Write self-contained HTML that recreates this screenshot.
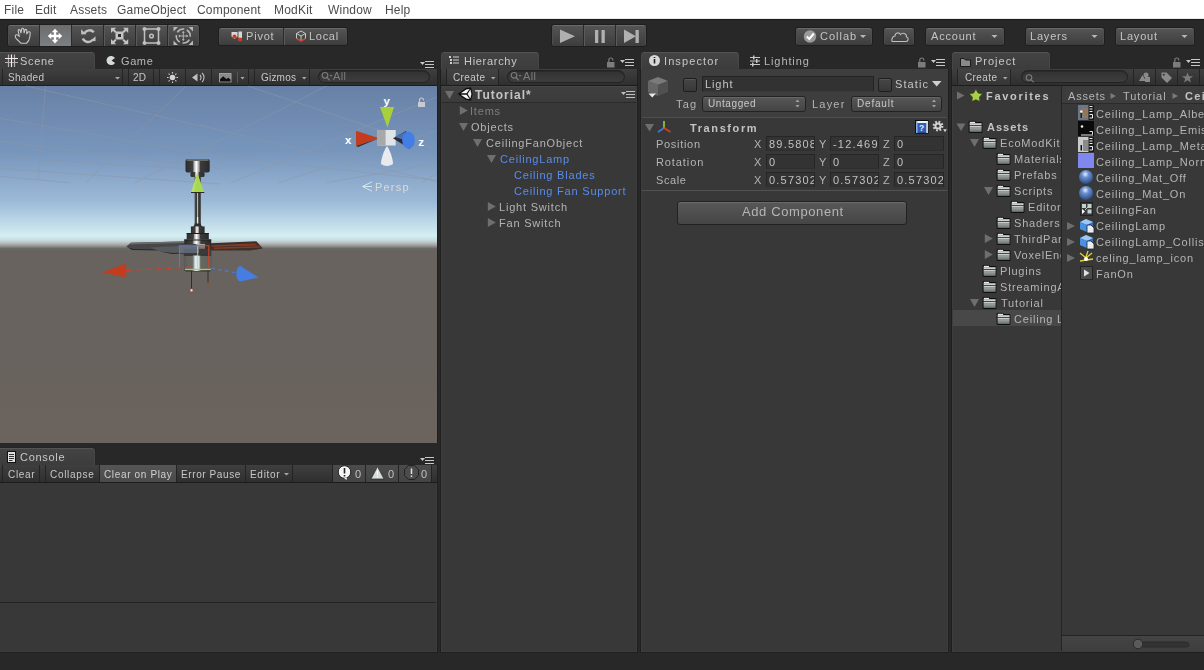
<!DOCTYPE html>
<html><head><meta charset="utf-8">
<style>
*{box-sizing:border-box;margin:0;padding:0}
html,body{width:1204px;height:670px;overflow:hidden;background:#282828}
body{position:relative;font-family:"Liberation Sans",sans-serif;font-size:11px;color:#b4b4b4}
.a{position:absolute}
.t{position:absolute;white-space:nowrap;line-height:1;will-change:transform}
svg{position:absolute;overflow:visible}
.btn{position:absolute;border:1px solid #1e1e1e;border-radius:3px;background:linear-gradient(#555555,#3d3d3d);box-shadow:inset 0 1px 0 #6a6a6a,inset 1px 0 0 #4e4e4e,inset -1px 0 0 #4e4e4e}
.seg{position:absolute;top:0;bottom:0;border-left:1px solid #2a2a2a;box-shadow:1px 0 0 #5a5a5a}
.tab{position:absolute;border-radius:4px 4px 0 0;background:linear-gradient(#444444,#3c3c3c);border:1px solid #262626;border-bottom:none;box-shadow:inset 0 1px 0 #545454,inset 1px 0 0 #474747,inset -1px 0 0 #474747}
.tb{position:absolute;background:linear-gradient(#3f3f3f,#2f2f2f);border-bottom:1px solid #1c1c1c}
.vs{position:absolute;width:1px;background:#242424}
.panel{position:absolute;background:#383838}
.search{position:absolute;border-radius:7px;background:linear-gradient(#323232,#3d3d3d);border:1px solid #232323;box-shadow:inset 0 1px 0 #2a2a2a}
</style></head><body>
<div class="a" style="left:0px;top:0px;width:1204px;height:18px;background:#fff"></div>
<div class="a" style="left:0px;top:18px;width:1204px;height:1px;background:#eaeaea"></div>
<div class="a" style="left:0px;top:19px;width:1204px;height:1px;background:#1a1a1a"></div>
<span class="t" style="left:3.5px;top:4px;font-size:12px;font-weight:400;color:#4c4c4c;letter-spacing:0.2px;">File</span>
<span class="t" style="left:35px;top:4px;font-size:12px;font-weight:400;color:#4c4c4c;letter-spacing:0.2px;">Edit</span>
<span class="t" style="left:69.8px;top:4px;font-size:12px;font-weight:400;color:#4c4c4c;letter-spacing:0.2px;">Assets</span>
<span class="t" style="left:116.8px;top:4px;font-size:12px;font-weight:400;color:#4c4c4c;letter-spacing:0.2px;">GameObject</span>
<span class="t" style="left:196.8px;top:4px;font-size:12px;font-weight:400;color:#4c4c4c;letter-spacing:0.2px;">Component</span>
<span class="t" style="left:274px;top:4px;font-size:12px;font-weight:400;color:#4c4c4c;letter-spacing:0.2px;">ModKit</span>
<span class="t" style="left:327.8px;top:4px;font-size:12px;font-weight:400;color:#4c4c4c;letter-spacing:0.2px;">Window</span>
<span class="t" style="left:385px;top:4px;font-size:12px;font-weight:400;color:#4c4c4c;letter-spacing:0.2px;">Help</span>
<div class="btn" style="left:7px;top:24px;width:193px;height:23px;"><div class="a" style="left:31px;top:0;width:33px;height:21px;background:linear-gradient(#6c6c6c,#7c8083);border-left:1px solid #2c2c2c;border-right:1px solid #2c2c2c"></div><div class="seg" style="left:95px"></div><div class="seg" style="left:127px"></div><div class="seg" style="left:159px"></div></div>
<svg style="left:0;top:20px" width="210" height="30" viewBox="0 20 210 30">
 <path d="M20.8 43.2 L16.3 38.6 C15 37.2 15 35.5 16 35 C17 34.5 18.3 35.2 19.3 36.5 L18.2 31 C18 29.6 19.6 29 20.2 30.3 L20.9 32.8 L21.6 29.3 C21.9 27.9 23.6 27.9 23.8 29.3 L24.1 32.8 L24.9 30.2 C25.3 29 27 29.2 26.9 30.6 L26.7 33.8 L28.2 32 C28.9 31.4 30.3 31.8 30.2 33 L29.8 37 C29.4 40 28 42 26.5 43.2 Z" fill="none" stroke="#c8c8c8" stroke-width="1.1" stroke-linejoin="round"/>
 <path fill="#fff" d="M55 28.7 L58.3 32.3 L56.2 32.3 L56.2 34.8 L58.7 34.8 L58.7 32.7 L62.3 36 L58.7 39.3 L58.7 37.2 L56.2 37.2 L56.2 39.7 L58.3 39.7 L55 43.5 L51.7 39.7 L53.8 39.7 L53.8 37.2 L51.3 37.2 L51.3 39.3 L47.8 36 L51.3 32.7 L51.3 34.8 L53.8 34.8 L53.8 32.3 L51.7 32.3 Z"/>
 <g fill="none" stroke="#c0c0c0" stroke-width="2.4"><path d="M84.5 33.2 A5.8 5.8 0 0 1 93.8 32.2"/><path d="M82.8 38.6 A5.8 5.8 0 0 0 92.5 40"/></g>
 <g fill="#c0c0c0"><path d="M81 29.3 L81.3 34.5 L86.4 34.2 Z"/><path d="M95.6 36.2 L95.5 41.3 L90.3 40.8 Z"/></g>
 <rect x="115.5" y="31.5" width="8" height="8" fill="#c4c4c4"/><rect x="118" y="34" width="3" height="3" fill="#2e2e2e"/>
 <g stroke="#c4c4c4" stroke-width="2" fill="none"><path d="M112.5 29 L115.8 32.3 M126.5 29 L123.2 32.3 M112.5 43 L115.8 39.7 M126.5 43 L123.2 39.7"/></g>
 <path fill="#c4c4c4" d="M111 27.8 L116.2 27.8 L111 33Z M128.2 27.8 L123 27.8 L128.2 33Z M111 44.2 L116.2 44.2 L111 39Z M128.2 44.2 L123 44.2 L128.2 39Z"/>
 <g fill="none" stroke="#c0c0c0" stroke-width="1.5"><rect x="144.5" y="29" width="14" height="14"/><circle cx="151.5" cy="36" r="1.8"/></g>
 <g fill="#c0c0c0"><circle cx="144.5" cy="29" r="2"/><circle cx="158.5" cy="29" r="2"/><circle cx="144.5" cy="43" r="2"/><circle cx="158.5" cy="43" r="2"/></g>
 <g fill="none" stroke="#b8b8b8" stroke-width="1.6"><circle cx="183.3" cy="36" r="7" stroke-dasharray="8 3" transform="rotate(-60 183.3 36)"/></g>
 <path d="M183.3 31.8 V40.2 M179.1 36 H187.5" stroke="#b8b8b8" stroke-width="0.9" fill="none"/>
 <g fill="#b8b8b8"><path d="M173.5 27 L178 27 L173.5 31.5Z M193 27 L188.5 27 L193 31.5Z M173.5 45 L178 45 L173.5 40.5Z M193 45 L188.5 45 L193 40.5Z"/><path d="M183.3 31 L184.8 32.8 L181.8 32.8Z M183.3 41 L184.8 39.2 L181.8 39.2Z M178.3 36 L180.1 34.5 L180.1 37.5Z M188.3 36 L186.5 34.5 L186.5 37.5Z"/></g>
</svg>
<div class="btn" style="left:218px;top:27px;width:130px;height:19px"><div class="seg" style="left:64px"></div></div>
<svg style="left:228px;top:28px" width="90" height="17" viewBox="228 28 90 17">
 <path d="M231.5 32 H237.5 V36.5 L234.5 39 L231.5 36.5Z" fill="#d8d8d8"/><circle cx="234.5" cy="36.5" r="2" fill="#d03a1e"/>
 <rect x="238.5" y="31.5" width="3.5" height="6.5" fill="#d8d8d8"/><circle cx="240" cy="39.5" r="2" fill="#d03a1e"/>
 <g fill="none" stroke="#c8c8c8" stroke-width="1"><path d="M296.5 33.5 L301 31 L305.5 33.5 V38.5 L301 41 L296.5 38.5Z M296.5 33.5 L301 36 L305.5 33.5 M301 36 V41"/></g>
 <path d="M296.5 38.5 L301 41 L305.5 38.5" fill="none" stroke="#d03a1e" stroke-width="1.3"/>
</svg>
<span class="t" style="left:245.6px;top:31px;font-size:11px;font-weight:400;color:#c4c4c4;letter-spacing:0.8px;">Pivot</span>
<span class="t" style="left:308.5px;top:31px;font-size:11px;font-weight:400;color:#c4c4c4;letter-spacing:0.7px;">Local</span>
<div class="btn" style="left:551px;top:24px;width:96px;height:23px"><div class="seg" style="left:31px"></div><div class="seg" style="left:63px"></div></div>
<svg style="left:552px;top:25px" width="94" height="21" viewBox="552 25 94 21">
 <path d="M560 29.5 L575 36.3 L560 43Z" fill="#b0b0b0"/>
 <rect x="595" y="30" width="3.3" height="13" fill="#b0b0b0"/><rect x="601.5" y="30" width="3.3" height="13" fill="#b0b0b0"/>
 <path d="M624 29.5 L636 36.3 L624 43Z" fill="#b0b0b0"/><rect x="635.5" y="30" width="3.3" height="13" fill="#b0b0b0"/>
</svg>
<div class="btn" style="left:795px;top:27px;width:78px;height:19px"></div>
<div class="btn" style="left:883px;top:27px;width:32px;height:19px"></div>
<div class="btn" style="left:925px;top:27px;width:80px;height:19px"></div>
<div class="btn" style="left:1025px;top:27px;width:80px;height:19px"></div>
<div class="btn" style="left:1115px;top:27px;width:80px;height:19px"></div>
<svg style="left:796px;top:28px" width="408" height="17" viewBox="796 28 408 17">
 <circle cx="810" cy="36.5" r="6.2" fill="#9a9a9a"/><path d="M806.8 36.5 L809.3 39 L813.8 33.5" fill="none" stroke="#fff" stroke-width="2"/>
 <path d="M892.5 41.5 H906 C908.5 41.5 909 37.5 906.5 37 C906.8 33.5 902.5 32 900.5 34.5 C899 32 895 32.5 895 36 C892 36 891 41.5 892.5 41.5Z" fill="none" stroke="#c0c0c0" stroke-width="1.1"/>
 <path fill="#b8b8b8" d="M860 35 H866 L863 38Z M991.5 35 H997.5 L994.5 38Z M1091.5 35 H1097.5 L1094.5 38Z M1181.5 35 H1187.5 L1184.5 38Z"/>
</svg>
<span class="t" style="left:819.8px;top:31px;font-size:11px;font-weight:400;color:#c4c4c4;letter-spacing:1.0px;">Collab</span>
<span class="t" style="left:931.0px;top:31px;font-size:11px;font-weight:400;color:#c4c4c4;letter-spacing:0.8px;">Account</span>
<span class="t" style="left:1030px;top:31px;font-size:11px;font-weight:400;color:#c4c4c4;letter-spacing:0.8px;">Layers</span>
<span class="t" style="left:1120px;top:31px;font-size:11px;font-weight:400;color:#c4c4c4;letter-spacing:0.8px;">Layout</span>
<div class="tab" style="left:-4px;top:51px;width:100px;height:18px"></div>
<svg style="left:0;top:50px" width="440" height="20" viewBox="0 50 440 20">
 <g stroke="#b8b0b0" stroke-width="1.2"><path d="M5 58.5 H18 M5 62.5 H18 M8.5 54.5 V67 M14.5 54.5 V67"/></g>
 <g stroke="#f0f0f0" stroke-width="1.2"><path d="M5 58.5 H18 M11.5 54.5 V67"/></g>
 <path d="M115 58 A4.6 4.6 0 1 0 115 63 L111.5 60.5Z" fill="#d4dadc"/>
 <path d="M420 62 H425 L422.5 65Z" fill="#c8c8c8"/><g stroke="#c8c8c8" stroke-width="1.2"><path d="M425 61.5 H434 M425 64.5 H434 M425 67.5 H434"/></g>
</svg>
<span class="t" style="left:19.6px;top:56px;font-size:11px;font-weight:400;color:#c8c8c8;letter-spacing:0.7px;">Scene</span>
<span class="t" style="left:120.6px;top:56px;font-size:11px;font-weight:400;color:#b8b8b8;letter-spacing:0.6px;">Game</span>
<div class="tb" style="left:0;top:69px;width:437px;height:17px"></div>
<div class="vs" style="left:2px;top:69px;height:16px"></div>
<div class="vs" style="left:122px;top:69px;height:16px"></div>
<div class="vs" style="left:128px;top:69px;height:16px"></div>
<div class="vs" style="left:153px;top:69px;height:16px"></div>
<div class="vs" style="left:159px;top:69px;height:16px"></div>
<div class="vs" style="left:185px;top:69px;height:16px"></div>
<div class="vs" style="left:211px;top:69px;height:16px"></div>
<div class="vs" style="left:248px;top:69px;height:16px"></div>
<div class="vs" style="left:254px;top:69px;height:16px"></div>
<div class="vs" style="left:309px;top:69px;height:16px"></div>
<span class="t" style="left:7.8px;top:73px;font-size:10px;font-weight:400;color:#c8c8c8;letter-spacing:0.3px;">Shaded</span>
<span class="t" style="left:133.4px;top:73px;font-size:10px;font-weight:400;color:#c8c8c8;letter-spacing:0.1px;">2D</span>
<span class="t" style="left:260.6px;top:73px;font-size:10px;font-weight:400;color:#c8c8c8;letter-spacing:0.2px;">Gizmos</span>
<div class="search" style="left:318px;top:70px;width:112px;height:13px"></div>
<svg style="left:110px;top:69px" width="330" height="17" viewBox="110 69 330 17">
 <path fill="#a8a8a8" d="M115 77 H120 L117.5 79.5Z M240.5 77 H244.5 L242.5 79.5Z M302 77 H306.5 L304.2 79.5Z"/>
 <circle cx="172.5" cy="77.5" r="2.8" fill="#d0d4d6"/>
 <g stroke="#d0d4d6" stroke-width="1.1"><path d="M172.5 72 V73.6 M172.5 81.4 V83 M167 77.5 H168.6 M176.4 77.5 H178 M168.6 73.6 L169.7 74.7 M175.3 80.3 L176.4 81.4 M176.4 73.6 L175.3 74.7 M169.7 80.3 L168.6 81.4"/></g>
 <path d="M192 77.5 L197.5 73.5 V81.5Z" fill="#c0c0c0"/>
 <g fill="none" stroke="#c0c0c0" stroke-width="1.1"><path d="M200 75 A3.5 3.5 0 0 1 200 80"/><path d="M202 73 A6 6 0 0 1 202 82"/></g>
 <rect x="219.5" y="73.5" width="11.5" height="8.5" fill="#8a8a8a" stroke="#9c9c9c" stroke-width="1"/>
 <path d="M220 81.5 V79.2 L223.2 76.2 L226.3 79 L228.3 77.8 L230.5 79.5 V81.5Z" fill="#0e0e0e"/>
 <path d="M219 82.5 H231.5" stroke="#555" stroke-width="1"/>
 <path d="M237.5 71.5 V83" stroke="#555" stroke-width="1"/>
 <g fill="none" stroke="#7c7c7c" stroke-width="1.1"><circle cx="325" cy="75.3" r="2.8"/><path d="M327 77.5 L329.8 80.3"/></g>
 <path d="M329.5 75 H332.5 L331 76.8Z" fill="#7c7c7c"/>
</svg>
<span class="t" style="left:333.4px;top:71px;font-size:11px;font-weight:400;color:#7c7c7c;letter-spacing:0.3px;">All</span>
<svg style="left:0;top:86px" width="437" height="357" viewBox="0 86 437 357">
 <defs>
  <linearGradient id="sky" x1="0" y1="86" x2="0" y2="443" gradientUnits="userSpaceOnUse">
   <stop offset="0" stop-color="#6880a6"/>
   <stop offset="0.185" stop-color="#7896bc"/>
   <stop offset="0.325" stop-color="#9dbad8"/>
   <stop offset="0.42" stop-color="#d4eef2"/>
   <stop offset="0.432" stop-color="#c4dce2"/>
   <stop offset="0.437" stop-color="#c4c8c8"/>
   <stop offset="0.446" stop-color="#a0a0a0"/>
   <stop offset="0.455" stop-color="#6c6a68"/>
   <stop offset="0.462" stop-color="#68635f"/>
   <stop offset="1" stop-color="#6a635e"/>
  </linearGradient>
 </defs>
 <rect x="0" y="86" width="437" height="357" fill="url(#sky)"/>
 <g stroke="#8c97a8" stroke-width="1" opacity="0.55" fill="none">
  <path d="M26 86 L220 130.2 M0 118.3 L220 156.5 M0 141.4 L220 168.4 M0 157.2 L181.6 168.4 M0 168.4 L220 184 M0 176.3 L69 182.7 M45.4 86 L38.2 180.4 M186 86 L86 182.7 M220 139.8 L135 182.7"/>
  <path d="M247.8 86 L437 149.3 M326.6 86 L200 150.5 M200 125.4 L437 181.6 M437 96.8 L231 182.7 M200 154 L437 180.4 M437 130.2 L278.8 182.7 M437 163.6 L326.6 182.7 M437 173.2 L422 182.7"/>
 </g>
 <!-- fan blades -->
 <defs>
  <linearGradient id="metal" x1="0" y1="0" x2="1" y2="0">
   <stop offset="0" stop-color="#2a2a2a"/><stop offset="0.3" stop-color="#404040"/><stop offset="0.36" stop-color="#b8b8b8"/><stop offset="0.45" stop-color="#ffffff"/><stop offset="0.56" stop-color="#9a9a9a"/><stop offset="0.62" stop-color="#3c3c3c"/><stop offset="1" stop-color="#2a2a2a"/>
  </linearGradient>
  <linearGradient id="rod" x1="0" y1="0" x2="1" y2="0">
   <stop offset="0" stop-color="#2a2a2a"/><stop offset="0.35" stop-color="#8a8a8a"/><stop offset="0.55" stop-color="#e8e8e8"/><stop offset="0.8" stop-color="#6a6a6a"/><stop offset="1" stop-color="#2a2a2a"/>
  </linearGradient>
 </defs>
 <path d="M126.2 246.5 L131 242.8 L190 241.3 L198 245.5 L160 249.3 L134 249Z" fill="#474747"/>
 <path d="M131 242.8 L190 241.3 L192 242.8 L129 244.6Z" fill="#6a6a6a"/>
 <path d="M126.2 246.5 L134 249 L160 249.3 L158 250.5 L132 250Z" fill="#2a2a2a"/>
 <path d="M150 247.5 L186 245.6 L200 247 L196 251.5 L174 253 L160 251.6Z" fill="#555a5e"/>
 <path d="M160 251.6 L174 253 L196 251.5 L195 253 L172 254Z" fill="#2a2a2a"/>
 <path d="M205 243.5 L256.3 241.3 L262.9 248.5 L250 250.5 L205 250.5Z" fill="#3a302c"/>
 <path d="M212 245.2 L255 243.6 L258 245.4 L212 246.8Z M214 247.4 L259.5 246.2 L261 247.6 L214 249Z" fill="#8a3a22"/>
 <!-- rod & canopy -->
 <rect x="194.7" y="176" width="6.1" height="51" fill="#383838"/>
 <rect x="195.2" y="176" width="1" height="51" fill="#4a4a4a"/>
 <path d="M197.6 192 V217" stroke="#c8dc58" stroke-width="1"/>
 <path d="M197.6 217 V226" stroke="#f0f0d8" stroke-width="1.4"/>
 <path d="M194.7 223.5 Q194.5 226.8 191 227.5 H204.5 Q201 226.8 200.8 223.5Z" fill="#2e2e2e"/>
 <rect x="185.5" y="159" width="24.2" height="13.5" rx="2" fill="url(#metal)"/>
 <rect x="186.5" y="159" width="22.2" height="2" rx="1" fill="#6a6a6a"/>
 <rect x="190.5" y="172" width="14" height="5" rx="1.5" fill="url(#metal)"/>
 <path d="M197.2 172.4 L204 192 L191.4 192Z" fill="#a8d850"/>
 <path d="M197.2 172.4 L191.4 192 L194 192Z" fill="#c4e878" opacity="0.6"/>
 <path d="M191 192.5 H204.3" stroke="#2a2a2a" stroke-width="1"/>
 <!-- motor housing -->
 <rect x="190.9" y="226.4" width="13.7" height="6.6" fill="url(#metal)"/>
 <rect x="186.7" y="233" width="22.1" height="6.5" fill="url(#metal)"/>
 <rect x="184.3" y="239.5" width="26.9" height="4.5" fill="url(#metal)"/>
 <path d="M186.7 233.5 H208.8 M184.3 240 H211.2" stroke="#1e1e1e" stroke-width="1"/>
 <!-- lower body -->
 <rect x="183.7" y="249" width="27.6" height="7.5" fill="#3a3a3a"/>
 <rect x="180" y="246" width="19" height="7" fill="#6a7280" opacity="0.8"/>
 <rect x="184.3" y="255.6" width="26.9" height="15.6" rx="1.5" fill="url(#metal)"/>
 <rect x="184.3" y="256" width="26.9" height="14" fill="#8c8c84" opacity="0.55"/>
 <rect x="194.5" y="256" width="5" height="14" fill="#d8eaf0"/>
 <path d="M185 269.5 H211" stroke="#b8c070" stroke-width="1.4"/>
 <path d="M186 271.5 H210" stroke="#7a3a2a" stroke-width="1"/>
 <g fill="none" stroke-width="1.1"><path d="M179.5 267.5 V245.7 H198.5" stroke="#4a7ce0"/><path d="M199 245.7 H208.8 V268" stroke="#d04428"/></g>
 <path d="M197.7 246 V270" stroke="#c8d870" stroke-width="0.9"/>
 <!-- handles -->
 <path d="M126 270.5 L192 267" stroke="#c8442a" stroke-width="1.3" stroke-dasharray="5 5"/>
 <path d="M211 268 L237 273" stroke="#4a7ad8" stroke-width="1.2" stroke-dasharray="4 3"/>
 <path d="M102.3 272.3 L126.2 263.6 L126.2 277.4Z" fill="#c43c1e"/>
 <path d="M240.3 266 L258.5 277.4 L240.3 281.6Z" fill="#467de0"/>
 <ellipse cx="240.3" cy="273.8" rx="4" ry="7.8" fill="#467de0"/>
 <g stroke="#2e2e2e" stroke-width="1"><path d="M191.5 271 V289.5 M208 271 V282.5"/></g>
 <circle cx="191.5" cy="290.3" r="1.5" fill="#f4f0e8" stroke="#b04020" stroke-width="0.7"/>
 <circle cx="208" cy="283.1" r="1.4" fill="#a04828"/>
 <!-- gizmo -->
 <path d="M380 107 L394 107 L387.5 127.4Z" fill="#a8d038"/>
 <path d="M381 146 L393 166 L381 166Z" fill="#ffffff" opacity="0"/>
 <path d="M387 146 C383 152 381 160 381 164 Q387 168 393 164 C393 160 391 152 387 146Z" fill="#e8eaec"/>
 <path d="M356 130.7 L379 138.3 L356 146Z" fill="#c43c1e"/>
 <path d="M356 146 L379 138.3 L358 147Z" fill="#3a2a28"/>
 <rect x="377.6" y="130" width="18.1" height="15.5" fill="#dfe4e8"/>
 <rect x="377.6" y="130" width="8" height="15.5" fill="#a8a8a8"/>
 <path d="M393 138.3 L406 131 L410 149Z" fill="#2a2a30"/>
 <path d="M395 137 L406 131.5 L404 140Z" fill="#4a70b0"/>
 <ellipse cx="408.5" cy="140.2" rx="6.3" ry="8.5" fill="#437de6"/>
 <g fill="#fff" font-family="Liberation Sans" font-weight="700" font-size="11.5"><text x="383.5" y="104.5">y</text><text x="345" y="143.5">x</text><text x="418.3" y="145.5">z</text></g>
 <rect x="418" y="102" width="7" height="5" fill="#c8ccd2"/>
 <path d="M419.5 102 V100 A2 2 0 0 1 423.5 100 V100.5" fill="none" stroke="#c8ccd2" stroke-width="1.1"/>
 <path d="M372 181.8 L362.5 186.5 L372 191.2 M363 186.5 H372" fill="none" stroke="#d4e4ee" stroke-width="1"/>
</svg>
<span class="t" style="left:374.6px;top:182px;font-size:11px;font-weight:400;color:#d8dcd8;letter-spacing:1.2px;">Persp</span>
<div class="tab" style="left:-4px;top:447px;width:100px;height:18px"></div>
<span class="t" style="left:20.4px;top:452px;font-size:11px;font-weight:400;color:#c8c8c8;letter-spacing:0.7px;">Console</span>
<div class="tb" style="left:0;top:465px;width:437px;height:18px"></div>
<div class="a" style="left:99px;top:465px;width:77px;height:17px;background:linear-gradient(#555,#4a4a4a)"></div>
<div class="a" style="left:332px;top:465px;width:99px;height:17px;background:linear-gradient(#4c4c4c,#444)"></div>
<div class="vs" style="left:2px;top:465px;height:17px"></div>
<div class="vs" style="left:39px;top:465px;height:17px"></div>
<div class="vs" style="left:45px;top:465px;height:17px"></div>
<div class="vs" style="left:99px;top:465px;height:17px"></div>
<div class="vs" style="left:176px;top:465px;height:17px"></div>
<div class="vs" style="left:245px;top:465px;height:17px"></div>
<div class="vs" style="left:292px;top:465px;height:17px"></div>
<div class="vs" style="left:332px;top:465px;height:17px"></div>
<div class="vs" style="left:365px;top:465px;height:17px"></div>
<div class="vs" style="left:398px;top:465px;height:17px"></div>
<div class="vs" style="left:431px;top:465px;height:17px"></div>
<div class="a" style="left:0px;top:483px;width:437px;height:169px;background:#383838"></div>
<div class="a" style="left:0px;top:602px;width:437px;height:1px;background:#232323"></div>
<span class="t" style="left:7.8px;top:470px;font-size:10px;font-weight:400;color:#c8c8c8;letter-spacing:0.7px;">Clear</span>
<span class="t" style="left:50.3px;top:470px;font-size:10px;font-weight:400;color:#c8c8c8;letter-spacing:0.7px;">Collapse</span>
<span class="t" style="left:104.3px;top:470px;font-size:10px;font-weight:400;color:#d0d0d0;letter-spacing:0.65px;">Clear on Play</span>
<span class="t" style="left:180.5px;top:470px;font-size:10px;font-weight:400;color:#c8c8c8;letter-spacing:0.6px;">Error Pause</span>
<span class="t" style="left:250px;top:470px;font-size:10px;font-weight:400;color:#c8c8c8;letter-spacing:0.7px;">Editor</span>
<span class="t" style="left:354.8px;top:468.5px;font-size:11px;font-weight:400;color:#c0c0c0;letter-spacing:0px;">0</span>
<span class="t" style="left:387.8px;top:468.5px;font-size:11px;font-weight:400;color:#c0c0c0;letter-spacing:0px;">0</span>
<span class="t" style="left:420.8px;top:468.5px;font-size:11px;font-weight:400;color:#c0c0c0;letter-spacing:0px;">0</span>
<svg style="left:0;top:446px" width="440" height="40" viewBox="0 446 440 40">
 <rect x="7.5" y="451.5" width="8" height="11" fill="#e0e0e0" stroke="#111" stroke-width="1"/>
 <g stroke="#333" stroke-width="1"><path d="M9 454.5 H14 M9 456.5 H14 M9 458.5 H14 M9 460.5 H12.5"/></g>
 <path d="M420 458 H425 L422.5 461Z" fill="#c8c8c8"/><g stroke="#c8c8c8" stroke-width="1.2"><path d="M425 457.5 H434 M425 460.5 H434 M425 463.5 H434"/></g>
 <path fill="#a8a8a8" d="M284 473 H289 L286.5 475.5Z"/>
 <circle cx="344.5" cy="472" r="6.3" fill="#f4f4f4" stroke="#222" stroke-width="1"/>
 <path d="M344 478 L346.5 480 L347 477.5Z" fill="#f4f4f4"/>
 <path d="M344.5 468 V473.5 M344.5 475 V476.5" stroke="#222" stroke-width="1.6"/>
 <path d="M377.5 466.5 L384 479 H371Z" fill="#d8dcdc" stroke="#333" stroke-width="0.8"/>
 <path d="M377.5 470.5 V475 M377.5 476.2 V477.5" stroke="#fff" stroke-width="1.2"/>
 <path d="M408.6 465.5 H414.4 L418.5 469.6 V475.4 L414.4 479.5 H408.6 L404.5 475.4 V469.6Z" fill="#4c4c4c" stroke="#222" stroke-width="1"/>
 <path d="M411.5 468.5 V474 M411.5 475.5 V477" stroke="#e0e0e0" stroke-width="1.5"/>
</svg>
<div class="tab" style="left:440px;top:51px;width:100px;height:18px"></div>
<span class="t" style="left:463.5px;top:56px;font-size:11px;font-weight:400;color:#c8c8c8;letter-spacing:0.7px;">Hierarchy</span>
<div class="tb" style="left:441px;top:69px;width:197px;height:17px"></div>
<div class="a" style="left:447px;top:69px;width:51px;height:16px;background:linear-gradient(#434343,#363636)"></div>
<div class="vs" style="left:446px;top:69px;height:16px"></div>
<div class="vs" style="left:498px;top:69px;height:16px"></div>
<div class="search" style="left:507px;top:70px;width:118px;height:13px"></div>
<span class="t" style="left:452.8px;top:73px;font-size:10px;font-weight:400;color:#c8c8c8;letter-spacing:0.4px;">Create</span>
<span class="t" style="left:522.5px;top:71px;font-size:11px;font-weight:400;color:#7c7c7c;letter-spacing:0.3px;">All</span>
<div class="a" style="left:441px;top:86px;width:197px;height:566px;background:#383838"></div>
<div class="a" style="left:441px;top:86px;width:197px;height:17px;background:linear-gradient(#404040,#3b3b3b);border-bottom:1px solid #2a2a2a;box-shadow:inset 0 1px 0 #474747"></div>
<span class="t" style="left:474.7px;top:89px;font-size:12px;font-weight:700;color:#c4c4c4;letter-spacing:1.0px;">Tutorial*</span>
<span class="t" style="left:470.4px;top:106px;font-size:11px;font-weight:400;color:#7e7e7e;letter-spacing:0.8px;">Items</span>
<span class="t" style="left:471.2px;top:122px;font-size:11px;font-weight:400;color:#b4b4b4;letter-spacing:0.8px;">Objects</span>
<span class="t" style="left:485.8px;top:138px;font-size:11px;font-weight:400;color:#b4b4b4;letter-spacing:0.8px;">CeilingFanObject</span>
<span class="t" style="left:499.8px;top:154px;font-size:11px;font-weight:400;color:#588cec;letter-spacing:0.8px;">CeilingLamp</span>
<span class="t" style="left:513.8px;top:170px;font-size:11px;font-weight:400;color:#588cec;letter-spacing:0.8px;">Ceiling Blades</span>
<span class="t" style="left:513.8px;top:186px;font-size:11px;font-weight:400;color:#588cec;letter-spacing:0.8px;">Ceiling Fan Support</span>
<span class="t" style="left:499px;top:202px;font-size:11px;font-weight:400;color:#b4b4b4;letter-spacing:0.8px;">Light Switch</span>
<span class="t" style="left:499px;top:218px;font-size:11px;font-weight:400;color:#b4b4b4;letter-spacing:0.8px;">Fan Switch</span>
<svg style="left:436px;top:50px" width="210" height="190" viewBox="436 50 210 190"><path d="M459.8 106.0 L467.8 110.5 L459.8 115.0Z" fill="#6e6e6e"/><path d="M459 123.0 H468 L463.5 131.0Z" fill="#6e6e6e"/><path d="M473 139.0 H482 L477.5 147.0Z" fill="#6e6e6e"/><path d="M487 155.0 H496 L491.5 163.0Z" fill="#6e6e6e"/><path d="M487.8 202.0 L495.8 206.5 L487.8 211.0Z" fill="#6e6e6e"/><path d="M487.8 218.0 L495.8 222.5 L487.8 227.0Z" fill="#6e6e6e"/><path d="M445 91 H454 L449.5 99Z" fill="#6e6e6e"/><path d="M457.8 94 L465.5 88.3 L471 87.3 L472.6 94 L471 100.7 L465.5 99.7Z" fill="#0e0e0e"/><path d="M460.8 93.2 L466.3 89.4 L469.6 88.9 L466.6 93.2Z M460.8 94.8 L466.6 94.8 L469.6 99.1 L466.3 98.6Z" fill="#f6f6f6"/><path d="M467.6 94 L470.4 89.6 L471.4 94 L470.4 98.4Z" fill="#e8f0f4"/><path d="M620 60 H625 L622.5 63Z M1 1" fill="#c8c8c8"/><path d="M625 59.5 H634 M625 62.5 H634 M625 65.5 H634" stroke="#c8c8c8" stroke-width="1.2"/><path d="M621 92 H626 L623.5 95Z" fill="#c0c0c0"/><path d="M626 91.5 H635 M626 94.5 H635 M626 97.5 H635" stroke="#c0c0c0" stroke-width="1.2"/><rect x="607" y="62" width="7.5" height="5.5" fill="#7c7c7c"/><path d="M608.8 62 V60 A2 2 0 0 1 612.8 60 V60.5" fill="none" stroke="#7c7c7c" stroke-width="1.2"/><g fill="#d0d0d0"><rect x="449" y="56" width="2" height="2"/><rect x="450" y="59" width="2" height="2"/><rect x="450" y="62" width="2" height="2"/></g><path d="M453 57 H459 M453 60 H459 M453 63 H459" stroke="#d0d0d0" stroke-width="1.2"/><path d="M491 77 H495.5 L493.2 79.5Z" fill="#a8a8a8"/><g fill="none" stroke="#7c7c7c" stroke-width="1.1"><circle cx="514" cy="75.3" r="2.8"/><path d="M516 77.5 L518.8 80.3"/></g><path d="M518.5 75 H521.5 L520 76.8Z" fill="#7c7c7c"/></svg>
<div class="tab" style="left:640px;top:51px;width:100px;height:18px"></div>
<span class="t" style="left:663.5px;top:56px;font-size:11px;font-weight:400;color:#c8c8c8;letter-spacing:1.1px;">Inspector</span>
<span class="t" style="left:763.5px;top:56px;font-size:11px;font-weight:400;color:#b8b8b8;letter-spacing:0.9px;">Lighting</span>
<div class="a" style="left:641px;top:69px;width:307px;height:583px;background:#383838"></div>
<div class="a" style="left:641px;top:69px;width:307px;height:48px;background:#3e3e3e"></div>
<div class="a" style="left:641px;top:117px;width:307px;height:1px;background:#4e4e4e"></div>
<div class="a" style="left:641px;top:190px;width:307px;height:1px;background:#525252"></div>
<div class="a" style="left:683px;top:78px;width:14px;height:14px;border:1px solid #1e1e1e;border-radius:2px;background:linear-gradient(#464646,#383838);box-shadow:inset 0 1px 0 #555"></div>
<div class="a" style="left:702px;top:76px;width:172px;height:16px;background:#323232;border:1px solid #232323;border-bottom-color:#383838"></div>
<span class="t" style="left:705px;top:79px;font-size:11px;font-weight:400;color:#c4c4c4;letter-spacing:0.9px;">Light</span>
<div class="a" style="left:878px;top:78px;width:14px;height:14px;border:1px solid #1e1e1e;border-radius:2px;background:linear-gradient(#464646,#383838);box-shadow:inset 0 1px 0 #555"></div>
<span class="t" style="left:894.5px;top:79px;font-size:11px;font-weight:400;color:#c4c4c4;letter-spacing:1.1px;">Static</span>
<span class="t" style="left:675.8px;top:99px;font-size:11px;font-weight:400;color:#b4b4b4;letter-spacing:1.2px;">Tag</span>
<span class="t" style="left:811.5px;top:99px;font-size:11px;font-weight:400;color:#b4b4b4;letter-spacing:1.2px;">Layer</span>
<div class="a" style="left:702px;top:96px;width:104px;height:16px;border:1px solid #232323;border-radius:3px;background:linear-gradient(#575757,#444);box-shadow:inset 0 1px 0 #666"></div>
<div class="a" style="left:851px;top:96px;width:91px;height:16px;border:1px solid #232323;border-radius:3px;background:linear-gradient(#575757,#444);box-shadow:inset 0 1px 0 #666"></div>
<span class="t" style="left:707.7px;top:99px;font-size:10px;font-weight:400;color:#c8c8c8;letter-spacing:0.6px;">Untagged</span>
<span class="t" style="left:856.5px;top:99px;font-size:10px;font-weight:400;color:#c8c8c8;letter-spacing:0.8px;">Default</span>
<span class="t" style="left:689.8px;top:123px;font-size:11px;font-weight:700;color:#c4c4c4;letter-spacing:1.6px;">Transform</span>
<span class="t" style="left:655.5px;top:139px;font-size:11px;font-weight:400;color:#b4b4b4;letter-spacing:0.7px;">Position</span>
<span class="t" style="left:754.0px;top:139px;font-size:11px;font-weight:400;color:#b4b4b4;letter-spacing:0px;">X</span>
<div class="a" style="left:765.5px;top:136px;width:49px;height:15px;background:#333;border:1px solid #262626;border-bottom-color:#2e2e2e;overflow:hidden"><span class="t" style="left:2px;top:2px;font-size:11px;color:#c0c0c0;letter-spacing:1.2px">89.5808</span></div>
<span class="t" style="left:819.0px;top:139px;font-size:11px;font-weight:400;color:#b4b4b4;letter-spacing:0px;">Y</span>
<div class="a" style="left:830.2px;top:136px;width:48.5px;height:15px;background:#333;border:1px solid #262626;border-bottom-color:#2e2e2e;overflow:hidden"><span class="t" style="left:2px;top:2px;font-size:11px;color:#c0c0c0;letter-spacing:1.2px">-12.469</span></div>
<span class="t" style="left:882.9px;top:139px;font-size:11px;font-weight:400;color:#b4b4b4;letter-spacing:0px;">Z</span>
<div class="a" style="left:894.1px;top:136px;width:49.5px;height:15px;background:#333;border:1px solid #262626;border-bottom-color:#2e2e2e;overflow:hidden"><span class="t" style="left:2px;top:2px;font-size:11px;color:#c0c0c0;letter-spacing:1.2px">0</span></div>
<span class="t" style="left:655.5px;top:157px;font-size:11px;font-weight:400;color:#b4b4b4;letter-spacing:0.9px;">Rotation</span>
<span class="t" style="left:754.0px;top:157px;font-size:11px;font-weight:400;color:#b4b4b4;letter-spacing:0px;">X</span>
<div class="a" style="left:765.5px;top:154px;width:49px;height:15px;background:#333;border:1px solid #262626;border-bottom-color:#2e2e2e;overflow:hidden"><span class="t" style="left:2px;top:2px;font-size:11px;color:#c0c0c0;letter-spacing:1.2px">0</span></div>
<span class="t" style="left:819.0px;top:157px;font-size:11px;font-weight:400;color:#b4b4b4;letter-spacing:0px;">Y</span>
<div class="a" style="left:830.2px;top:154px;width:48.5px;height:15px;background:#333;border:1px solid #262626;border-bottom-color:#2e2e2e;overflow:hidden"><span class="t" style="left:2px;top:2px;font-size:11px;color:#c0c0c0;letter-spacing:1.2px">0</span></div>
<span class="t" style="left:882.9px;top:157px;font-size:11px;font-weight:400;color:#b4b4b4;letter-spacing:0px;">Z</span>
<div class="a" style="left:894.1px;top:154px;width:49.5px;height:15px;background:#333;border:1px solid #262626;border-bottom-color:#2e2e2e;overflow:hidden"><span class="t" style="left:2px;top:2px;font-size:11px;color:#c0c0c0;letter-spacing:1.2px">0</span></div>
<span class="t" style="left:655.5px;top:175px;font-size:11px;font-weight:400;color:#b4b4b4;letter-spacing:0.6px;">Scale</span>
<span class="t" style="left:754.0px;top:175px;font-size:11px;font-weight:400;color:#b4b4b4;letter-spacing:0px;">X</span>
<div class="a" style="left:765.5px;top:172px;width:49px;height:15px;background:#333;border:1px solid #262626;border-bottom-color:#2e2e2e;overflow:hidden"><span class="t" style="left:2px;top:2px;font-size:11px;color:#c0c0c0;letter-spacing:1.2px">0.57302</span></div>
<span class="t" style="left:819.0px;top:175px;font-size:11px;font-weight:400;color:#b4b4b4;letter-spacing:0px;">Y</span>
<div class="a" style="left:830.2px;top:172px;width:48.5px;height:15px;background:#333;border:1px solid #262626;border-bottom-color:#2e2e2e;overflow:hidden"><span class="t" style="left:2px;top:2px;font-size:11px;color:#c0c0c0;letter-spacing:1.2px">0.57302</span></div>
<span class="t" style="left:882.9px;top:175px;font-size:11px;font-weight:400;color:#b4b4b4;letter-spacing:0px;">Z</span>
<div class="a" style="left:894.1px;top:172px;width:49.5px;height:15px;background:#333;border:1px solid #262626;border-bottom-color:#2e2e2e;overflow:hidden"><span class="t" style="left:2px;top:2px;font-size:11px;color:#c0c0c0;letter-spacing:1.2px">0.57302</span></div>
<div class="a" style="left:677px;top:201px;width:230px;height:24px;border:1px solid #222;border-radius:3px;background:linear-gradient(#585858,#454545);box-shadow:inset 0 1px 0 #6a6a6a"></div>
<span class="t" style="left:741.6px;top:205px;font-size:13px;font-weight:400;color:#b4b4b4;letter-spacing:0.6px;">Add Component</span>
<svg style="left:640px;top:50px" width="310" height="180" viewBox="640 50 310 180"><circle cx="654.5" cy="60.5" r="5.5" fill="#d8d8d8"/><path d="M654.5 59 V63.5 M654.5 57 V58" stroke="#222" stroke-width="1.6"/><g stroke="#c8c8c8" stroke-width="1.1"><path d="M750 57.5 H760 M750 61 H760 M750 64.5 H760"/></g><g fill="#c8c8c8"><rect x="753" y="55.5" width="1.5" height="4"/><rect x="756" y="59" width="1.5" height="4"/><rect x="752" y="62.5" width="1.5" height="4"/></g><rect x="918" y="62" width="7.5" height="5.5" fill="#7c7c7c"/><path d="M919.8 62 V60 A2 2 0 0 1 923.8 60 V60.5" fill="none" stroke="#7c7c7c" stroke-width="1.2"/><path d="M931 60 H936 L933.5 63Z" fill="#c8c8c8"/><path d="M936 59.5 H945 M936 62.5 H945 M936 65.5 H945" stroke="#c8c8c8" stroke-width="1.2"/><path d="M648 81 L658 77 L668 81 L658 85Z" fill="#7a7a7a"/><path d="M648 81 L658 85 L658 96 L648 92Z" fill="#666"/><path d="M658 85 L668 81 L668 92 L658 96Z" fill="#505050"/><path d="M648.5 93.5 H656 L652.2 97.5Z" fill="#e8e8e8"/><path d="M932 81 H941.5 L936.7 86.5Z" fill="#d0d0d0"/><path d="M795.5 102 L797.5 99.5 L799.5 102Z M795.5 105 L797.5 107.5 L799.5 105Z M932 102 L934 99.5 L936 102Z M932 105 L934 107.5 L936 105Z" fill="#a0a0a0"/><path d="M645 124 H654 L649.5 131.5Z" fill="#6e6e6e"/><path d="M664 128 V121" stroke="#9ad040" stroke-width="1.6"/><path d="M664 128 L658 132" stroke="#3a78e0" stroke-width="1.8"/><path d="M664 128 L670.5 132" stroke="#d04020" stroke-width="1.8"/><rect x="915.5" y="120.5" width="12.5" height="12.8" fill="#2f5fb4" stroke="#0e0e0e" stroke-width="1"/><rect x="917" y="121" width="11" height="2" fill="#f0f4f8"/><rect x="926.3" y="121" width="1.6" height="12" fill="#dfe6ee"/><rect x="916" y="121" width="1.5" height="12" fill="#8ab0e0"/><text x="919" y="130.5" font-family="Liberation Sans" font-size="8.5" font-weight="700" fill="#e8eef8">?</text><circle cx="938" cy="126" r="4.3" fill="none" stroke="#d4d4d4" stroke-width="2.2" stroke-dasharray="1.7 1.68"/><circle cx="938" cy="126" r="2.6" fill="none" stroke="#d4d4d4" stroke-width="2"/><path d="M943.2 129.3 H946.8 L945 132.3Z" fill="#d4d4d4"/></svg>
<div class="tab" style="left:951px;top:51px;width:100px;height:18px"></div>
<span class="t" style="left:974.5px;top:56px;font-size:11px;font-weight:400;color:#c8c8c8;letter-spacing:1.0px;">Project</span>
<div class="tb" style="left:952px;top:69px;width:252px;height:17px"></div>
<div class="a" style="left:958px;top:69px;width:52px;height:16px;background:linear-gradient(#434343,#363636)"></div>
<div class="vs" style="left:957px;top:69px;height:16px"></div>
<div class="vs" style="left:1010px;top:69px;height:16px"></div>
<div class="vs" style="left:1133px;top:69px;height:16px"></div>
<div class="vs" style="left:1155px;top:69px;height:16px"></div>
<div class="vs" style="left:1177px;top:69px;height:16px"></div>
<div class="vs" style="left:1199px;top:69px;height:16px"></div>
<div class="search" style="left:1021px;top:70px;width:107px;height:13px"></div>
<span class="t" style="left:964.8px;top:73px;font-size:10px;font-weight:400;color:#c8c8c8;letter-spacing:0.4px;">Create</span>
<div class="a" style="left:952px;top:86px;width:252px;height:566px;background:#383838"></div>
<div class="a" style="left:1061px;top:86px;width:1px;height:566px;background:#242424"></div>
<div class="a" style="left:1062px;top:86px;width:142px;height:18px;background:#3d3d3d;border-bottom:1px solid #2a2a2a"></div>
<div class="a" style="left:952px;top:310px;width:109px;height:16px;background:#484848"></div>
<div class="a" style="left:1062px;top:635px;width:142px;height:17px;background:linear-gradient(#444,#3e3e3e);border-top:1px solid #232323"></div>
<span class="t" style="left:986px;top:91px;font-size:11px;font-weight:700;color:#c4c4c4;letter-spacing:1.7px;">Favorites</span>
<span class="t" style="left:986.8px;top:122px;font-size:11px;font-weight:700;color:#c4c4c4;letter-spacing:1.0px;">Assets</span>
<span class="t" style="left:1068.4px;top:91px;font-size:11px;font-weight:400;color:#b4b4b4;letter-spacing:0.8px;">Assets</span>
<span class="t" style="left:1122.8px;top:91px;font-size:11px;font-weight:400;color:#b4b4b4;letter-spacing:0.9px;">Tutorial</span>
<span class="t" style="left:1184.8px;top:91px;font-size:11px;font-weight:700;color:#c4c4c4;letter-spacing:1.3px;">Ceiling Lamp</span>
<div class="a" style="left:952px;top:86px;width:109px;height:566px;overflow:hidden">
<span class="t" style="left:47.9px;top:52px;font-size:11px;color:#b4b4b4;letter-spacing:0.8px">EcoModKit</span>
<span class="t" style="left:61.5px;top:68px;font-size:11px;color:#b4b4b4;letter-spacing:0.8px">Materials</span>
<span class="t" style="left:61.5px;top:84px;font-size:11px;color:#b4b4b4;letter-spacing:0.8px">Prefabs</span>
<span class="t" style="left:61.5px;top:100px;font-size:11px;color:#b4b4b4;letter-spacing:0.8px">Scripts</span>
<span class="t" style="left:75.5px;top:116px;font-size:11px;color:#b4b4b4;letter-spacing:0.8px">Editor</span>
<span class="t" style="left:61.5px;top:132px;font-size:11px;color:#b4b4b4;letter-spacing:0.8px">Shaders</span>
<span class="t" style="left:62.3px;top:148px;font-size:11px;color:#b4b4b4;letter-spacing:0.8px">ThirdParty</span>
<span class="t" style="left:62.3px;top:164px;font-size:11px;color:#b4b4b4;letter-spacing:0.8px">VoxelEngine</span>
<span class="t" style="left:47.9px;top:180px;font-size:11px;color:#b4b4b4;letter-spacing:0.8px">Plugins</span>
<span class="t" style="left:47.9px;top:196px;font-size:11px;color:#b4b4b4;letter-spacing:0.8px">StreamingAssets</span>
<span class="t" style="left:48.7px;top:212px;font-size:11px;color:#b4b4b4;letter-spacing:0.8px">Tutorial</span>
<span class="t" style="left:62.3px;top:228px;font-size:11px;color:#b4b4b4;letter-spacing:0.8px">Ceiling Lamp</span>
</div>
<div class="a" style="left:1062px;top:104px;width:142px;height:531px;overflow:hidden">
<span class="t" style="left:34.4px;top:5px;font-size:11px;color:#b4b4b4;letter-spacing:0.8px">Ceiling_Lamp_Albedo</span>
<span class="t" style="left:34.4px;top:21px;font-size:11px;color:#b4b4b4;letter-spacing:0.8px">Ceiling_Lamp_Emission</span>
<span class="t" style="left:34.4px;top:37px;font-size:11px;color:#b4b4b4;letter-spacing:0.8px">Ceiling_Lamp_Metallic</span>
<span class="t" style="left:34.4px;top:53px;font-size:11px;color:#b4b4b4;letter-spacing:0.8px">Ceiling_Lamp_Normal</span>
<span class="t" style="left:34.4px;top:69px;font-size:11px;color:#b4b4b4;letter-spacing:0.8px">Ceiling_Mat_Off</span>
<span class="t" style="left:34.4px;top:85px;font-size:11px;color:#b4b4b4;letter-spacing:0.8px">Ceiling_Mat_On</span>
<span class="t" style="left:34.4px;top:101px;font-size:11px;color:#b4b4b4;letter-spacing:0.8px">CeilingFan</span>
<span class="t" style="left:34.4px;top:117px;font-size:11px;color:#b4b4b4;letter-spacing:0.8px">CeilingLamp</span>
<span class="t" style="left:34.4px;top:133px;font-size:11px;color:#b4b4b4;letter-spacing:0.8px">CeilingLamp_Collision</span>
<span class="t" style="left:34.4px;top:149px;font-size:11px;color:#b4b4b4;letter-spacing:0.8px">celing_lamp_icon</span>
<span class="t" style="left:34.4px;top:165px;font-size:11px;color:#b4b4b4;letter-spacing:0.8px">FanOn</span>
</div>
<svg style="left:950px;top:50px" width="254" height="610" viewBox="950 50 254 610"><path d="M960.5 58.5 H964 L965.5 60 H970.5 V66.5 H960.5Z" fill="#8a8a8a" stroke="#1a1a1a" stroke-width="1"/><rect x="1173" y="62" width="7.5" height="5.5" fill="#7c7c7c"/><path d="M1174.8 62 V60 A2 2 0 0 1 1178.8 60 V60.5" fill="none" stroke="#7c7c7c" stroke-width="1.2"/><path d="M1186 60 H1191 L1188.5 63Z" fill="#c8c8c8"/><path d="M1191 59.5 H1200 M1191 62.5 H1200 M1191 65.5 H1200" stroke="#c8c8c8" stroke-width="1.2"/><path d="M1003 77 H1007.5 L1005.2 79.5Z" fill="#a8a8a8"/><g fill="none" stroke="#7c7c7c" stroke-width="1.1"><circle cx="1029" cy="77.5" r="2.8"/><path d="M1031 79.7 L1033.8 82.3"/></g><path d="M1139 81 L1142.5 75 L1146 81Z" fill="#8a8a8a"/><circle cx="1146" cy="75" r="2.5" fill="#8a8a8a"/><rect x="1145" y="77" width="5" height="5" fill="#8a8a8a"/><path d="M1161.5 72.5 H1166.5 L1172 78 L1167 83 L1161.5 77.5Z" fill="#8a8a8a"/><circle cx="1163.8" cy="74.8" r="1" fill="#333"/><path d="M1187.5 72.5 L1189 76.3 L1193 76.3 L1189.8 78.7 L1191 82.5 L1187.5 80.2 L1184 82.5 L1185.2 78.7 L1182 76.3 L1186 76.3Z" fill="#7a7a7a"/><path d="M957 91.5 L964.5 95.5 L957 99.5Z" fill="#6e6e6e"/><path d="M975.90 89.10 L978.07 93.01 L982.46 93.87 L979.42 97.14 L979.96 101.58 L975.90 99.70 L971.84 101.58 L972.38 97.14 L969.34 93.87 L973.73 93.01Z" fill="#a4d04c" stroke="#4a3010" stroke-width="0.7" stroke-linejoin="round"/><path d="M1110.5 93 L1116 96 L1110.5 99Z M1172.5 93 L1178 96 L1172.5 99Z" fill="#7a7a7a"/><defs><linearGradient id="fold" x1="0" y1="0" x2="0" y2="1"><stop offset="0" stop-color="#a8acac"/><stop offset="1" stop-color="#667070"/></linearGradient></defs><path d="M969.1 121.39999999999999 H975.1 L976.1 122.6 H981.9 V132.4 H969.1Z" fill="#0e0e0e" stroke="#0e0e0e" stroke-width="1"/><rect x="969.8000000000001" y="121.8" width="5.3" height="1.6" fill="#e6e6e6"/><rect x="969.6" y="123.19999999999999" width="12" height="2" fill="#cdd1d1"/><rect x="969.6" y="125.19999999999999" width="12" height="0.9" fill="#4a4e4e"/><rect x="969.6" y="126.1" width="12" height="1" fill="#dcdfdf"/><rect x="969.6" y="127.1" width="12" height="4.8" fill="url(#fold)"/><path d="M956.5 123.5 H965.5 L961 131Z" fill="#6e6e6e"/><path d="M983.1 137.4 H989.1 L990.1 138.6 H995.9 V148.4 H983.1Z" fill="#0e0e0e" stroke="#0e0e0e" stroke-width="1"/><rect x="983.8000000000001" y="137.79999999999998" width="5.3" height="1.6" fill="#e6e6e6"/><rect x="983.6" y="139.2" width="12" height="2" fill="#cdd1d1"/><rect x="983.6" y="141.2" width="12" height="0.9" fill="#4a4e4e"/><rect x="983.6" y="142.1" width="12" height="1" fill="#dcdfdf"/><rect x="983.6" y="143.1" width="12" height="4.8" fill="url(#fold)"/><path d="M970 139.0 H979 L974.5 147.0Z" fill="#6e6e6e"/><path d="M997.1 153.4 H1003.1 L1004.1 154.6 H1009.9 V164.4 H997.1Z" fill="#0e0e0e" stroke="#0e0e0e" stroke-width="1"/><rect x="997.8000000000001" y="153.79999999999998" width="5.3" height="1.6" fill="#e6e6e6"/><rect x="997.6" y="155.2" width="12" height="2" fill="#cdd1d1"/><rect x="997.6" y="157.2" width="12" height="0.9" fill="#4a4e4e"/><rect x="997.6" y="158.1" width="12" height="1" fill="#dcdfdf"/><rect x="997.6" y="159.1" width="12" height="4.8" fill="url(#fold)"/><path d="M997.1 169.4 H1003.1 L1004.1 170.6 H1009.9 V180.4 H997.1Z" fill="#0e0e0e" stroke="#0e0e0e" stroke-width="1"/><rect x="997.8000000000001" y="169.79999999999998" width="5.3" height="1.6" fill="#e6e6e6"/><rect x="997.6" y="171.2" width="12" height="2" fill="#cdd1d1"/><rect x="997.6" y="173.2" width="12" height="0.9" fill="#4a4e4e"/><rect x="997.6" y="174.1" width="12" height="1" fill="#dcdfdf"/><rect x="997.6" y="175.1" width="12" height="4.8" fill="url(#fold)"/><path d="M997.1 185.4 H1003.1 L1004.1 186.6 H1009.9 V196.4 H997.1Z" fill="#0e0e0e" stroke="#0e0e0e" stroke-width="1"/><rect x="997.8000000000001" y="185.79999999999998" width="5.3" height="1.6" fill="#e6e6e6"/><rect x="997.6" y="187.2" width="12" height="2" fill="#cdd1d1"/><rect x="997.6" y="189.2" width="12" height="0.9" fill="#4a4e4e"/><rect x="997.6" y="190.1" width="12" height="1" fill="#dcdfdf"/><rect x="997.6" y="191.1" width="12" height="4.8" fill="url(#fold)"/><path d="M984 187.0 H993 L988.5 195.0Z" fill="#6e6e6e"/><path d="M1011.1 201.4 H1017.1 L1018.1 202.6 H1023.9 V212.4 H1011.1Z" fill="#0e0e0e" stroke="#0e0e0e" stroke-width="1"/><rect x="1011.8000000000001" y="201.79999999999998" width="5.3" height="1.6" fill="#e6e6e6"/><rect x="1011.6" y="203.2" width="12" height="2" fill="#cdd1d1"/><rect x="1011.6" y="205.2" width="12" height="0.9" fill="#4a4e4e"/><rect x="1011.6" y="206.1" width="12" height="1" fill="#dcdfdf"/><rect x="1011.6" y="207.1" width="12" height="4.8" fill="url(#fold)"/><path d="M997.1 217.4 H1003.1 L1004.1 218.6 H1009.9 V228.4 H997.1Z" fill="#0e0e0e" stroke="#0e0e0e" stroke-width="1"/><rect x="997.8000000000001" y="217.79999999999998" width="5.3" height="1.6" fill="#e6e6e6"/><rect x="997.6" y="219.2" width="12" height="2" fill="#cdd1d1"/><rect x="997.6" y="221.2" width="12" height="0.9" fill="#4a4e4e"/><rect x="997.6" y="222.1" width="12" height="1" fill="#dcdfdf"/><rect x="997.6" y="223.1" width="12" height="4.8" fill="url(#fold)"/><path d="M997.1 233.4 H1003.1 L1004.1 234.6 H1009.9 V244.4 H997.1Z" fill="#0e0e0e" stroke="#0e0e0e" stroke-width="1"/><rect x="997.8000000000001" y="233.79999999999998" width="5.3" height="1.6" fill="#e6e6e6"/><rect x="997.6" y="235.2" width="12" height="2" fill="#cdd1d1"/><rect x="997.6" y="237.2" width="12" height="0.9" fill="#4a4e4e"/><rect x="997.6" y="238.1" width="12" height="1" fill="#dcdfdf"/><rect x="997.6" y="239.1" width="12" height="4.8" fill="url(#fold)"/><path d="M984.8 234.0 L992.8 238.5 L984.8 243.0Z" fill="#6e6e6e"/><path d="M997.1 249.4 H1003.1 L1004.1 250.6 H1009.9 V260.4 H997.1Z" fill="#0e0e0e" stroke="#0e0e0e" stroke-width="1"/><rect x="997.8000000000001" y="249.79999999999998" width="5.3" height="1.6" fill="#e6e6e6"/><rect x="997.6" y="251.2" width="12" height="2" fill="#cdd1d1"/><rect x="997.6" y="253.2" width="12" height="0.9" fill="#4a4e4e"/><rect x="997.6" y="254.1" width="12" height="1" fill="#dcdfdf"/><rect x="997.6" y="255.1" width="12" height="4.8" fill="url(#fold)"/><path d="M984.8 250.0 L992.8 254.5 L984.8 259.0Z" fill="#6e6e6e"/><path d="M983.1 265.40000000000003 H989.1 L990.1 266.6 H995.9 V276.40000000000003 H983.1Z" fill="#0e0e0e" stroke="#0e0e0e" stroke-width="1"/><rect x="983.8000000000001" y="265.8" width="5.3" height="1.6" fill="#e6e6e6"/><rect x="983.6" y="267.20000000000005" width="12" height="2" fill="#cdd1d1"/><rect x="983.6" y="269.20000000000005" width="12" height="0.9" fill="#4a4e4e"/><rect x="983.6" y="270.1" width="12" height="1" fill="#dcdfdf"/><rect x="983.6" y="271.1" width="12" height="4.8" fill="url(#fold)"/><path d="M983.1 281.40000000000003 H989.1 L990.1 282.6 H995.9 V292.40000000000003 H983.1Z" fill="#0e0e0e" stroke="#0e0e0e" stroke-width="1"/><rect x="983.8000000000001" y="281.8" width="5.3" height="1.6" fill="#e6e6e6"/><rect x="983.6" y="283.20000000000005" width="12" height="2" fill="#cdd1d1"/><rect x="983.6" y="285.20000000000005" width="12" height="0.9" fill="#4a4e4e"/><rect x="983.6" y="286.1" width="12" height="1" fill="#dcdfdf"/><rect x="983.6" y="287.1" width="12" height="4.8" fill="url(#fold)"/><path d="M983.1 297.40000000000003 H989.1 L990.1 298.6 H995.9 V308.40000000000003 H983.1Z" fill="#0e0e0e" stroke="#0e0e0e" stroke-width="1"/><rect x="983.8000000000001" y="297.8" width="5.3" height="1.6" fill="#e6e6e6"/><rect x="983.6" y="299.20000000000005" width="12" height="2" fill="#cdd1d1"/><rect x="983.6" y="301.20000000000005" width="12" height="0.9" fill="#4a4e4e"/><rect x="983.6" y="302.1" width="12" height="1" fill="#dcdfdf"/><rect x="983.6" y="303.1" width="12" height="4.8" fill="url(#fold)"/><path d="M970 299.0 H979 L974.5 307.0Z" fill="#6e6e6e"/><path d="M997.1 313.40000000000003 H1003.1 L1004.1 314.6 H1009.9 V324.40000000000003 H997.1Z" fill="#0e0e0e" stroke="#0e0e0e" stroke-width="1"/><rect x="997.8000000000001" y="313.8" width="5.3" height="1.6" fill="#e6e6e6"/><rect x="997.6" y="315.20000000000005" width="12" height="2" fill="#cdd1d1"/><rect x="997.6" y="317.20000000000005" width="12" height="0.9" fill="#4a4e4e"/><rect x="997.6" y="318.1" width="12" height="1" fill="#dcdfdf"/><rect x="997.6" y="319.1" width="12" height="4.8" fill="url(#fold)"/><rect x="1078" y="105" width="16" height="15" fill="#6c7688"/><rect x="1082" y="108.5" width="6.5" height="9.5" fill="#8a7c62"/><circle cx="1084.5" cy="111" r="0.8" fill="#d04040"/><circle cx="1086" cy="114" r="0.8" fill="#d04040"/><circle cx="1081.3" cy="111.5" r="1.2" fill="#f4f4f4"/><rect x="1080.5" y="113" width="1.3" height="5" fill="#111"/><rect x="1088.5" y="105" width="5.5" height="15" fill="#1a1a1a"/><path d="M1089.5 106.5 h3 M1089.5 109 h3 M1089.5 111.5 h3 M1089.5 114.5 h3 v3.5 h-3" fill="none" stroke="#f0f0f0" stroke-width="1"/><rect x="1078" y="121" width="16" height="15" fill="#0a0a0a"/><circle cx="1082" cy="126.5" r="1.3" fill="#f0f0f0"/><path d="M1081 135 H1093 M1089.5 131.5 h3 v3" fill="none" stroke="#e8e8e8" stroke-width="1"/><rect x="1078" y="137" width="16" height="15" fill="#c8cccc"/><rect x="1083" y="140" width="5.5" height="11" fill="#8a8a8a"/><rect x="1080.5" y="145" width="1.5" height="5.5" fill="#111"/><rect x="1088.5" y="137" width="5.5" height="15" fill="#1a1a1a"/><path d="M1089.5 138.5 h3 M1089.5 141 h3 M1089.5 143.5 h3 M1089.5 146.5 h3 v3.5 h-3" fill="none" stroke="#f0f0f0" stroke-width="1"/><rect x="1078" y="153" width="16" height="15" fill="#8088f0"/><defs><radialGradient id="sph" cx="0.45" cy="0.3" r="0.7"><stop offset="0" stop-color="#e8f0ff"/><stop offset="0.35" stop-color="#6a90d0"/><stop offset="1" stop-color="#2a4a80"/></radialGradient></defs><circle cx="1086" cy="177" r="7" fill="url(#sph)"/><circle cx="1086" cy="193" r="7" fill="url(#sph)"/><rect x="1080.5" y="202.5" width="12" height="13" fill="#3a3a3a" stroke="#222" stroke-width="1"/><rect x="1082" y="204" width="4" height="4" fill="#c0d0d0"/><rect x="1087.5" y="204" width="4" height="4" fill="#c0d0d0"/><rect x="1087.5" y="209.5" width="4" height="4" fill="#c0d0d0"/><path d="M1082 209 L1085 211.5 L1082 214Z" fill="#fff"/><path d="M1085 210 L1088 207" stroke="#c0d0d0" stroke-width="1"/><path d="M1080 222 L1086 219 L1093 222 L1093 229 L1087 232 L1080 229Z" fill="#2f6ac8"/><path d="M1080 222 L1086 219 L1093 222 L1087 225Z" fill="#9cc8f4"/><path d="M1080 222 L1087 225 L1087 232 L1080 229Z" fill="#4a90e0"/><path d="M1087 225 H1091 L1094 228 V233 H1087Z" fill="#e8eef0" stroke="#222" stroke-width="0.8"/><path d="M1067 222 L1075 226 L1067 230Z" fill="#6e6e6e"/><path d="M1080 238 L1086 235 L1093 238 L1093 245 L1087 248 L1080 245Z" fill="#2f6ac8"/><path d="M1080 238 L1086 235 L1093 238 L1087 241Z" fill="#9cc8f4"/><path d="M1080 238 L1087 241 L1087 248 L1080 245Z" fill="#4a90e0"/><path d="M1087 241 H1091 L1094 244 V249 H1087Z" fill="#e8eef0" stroke="#222" stroke-width="0.8"/><path d="M1067 238 L1075 242 L1067 246Z" fill="#6e6e6e"/><path d="M1067 254 L1075 258 L1067 262Z" fill="#6e6e6e"/><g stroke="#e0d040" stroke-width="1.3" fill="none"><path d="M1080 253 L1086 258 M1092 253 L1086 258 M1080 261 L1093 259 M1088 251 L1086 257"/></g><circle cx="1086" cy="259" r="2" fill="#fff"/><rect x="1080.5" y="266.5" width="12" height="13" fill="#4a4a4a" stroke="#222" stroke-width="1"/><path d="M1084 269.5 L1089.5 273 L1084 276.5Z" fill="#e0e0e0"/><rect x="1140" y="642" width="49" height="5" rx="2.5" fill="#333" stroke="#2a2a2a" stroke-width="0.8"/><circle cx="1138" cy="644" r="4.8" fill="#5a5a5a" stroke="#2a2a2a" stroke-width="1"/></svg>
<div class="a" style="left:437px;top:69px;width:1px;height:374px;background:#1f1f1f"></div>
<div class="a" style="left:437px;top:465px;width:1px;height:188px;background:#1f1f1f"></div>
<div class="a" style="left:440px;top:69px;width:1px;height:584px;background:#1f1f1f"></div>
<div class="a" style="left:637px;top:69px;width:1px;height:584px;background:#1f1f1f"></div>
<div class="a" style="left:640px;top:69px;width:1px;height:584px;background:#1f1f1f"></div>
<div class="a" style="left:948px;top:69px;width:1px;height:584px;background:#1f1f1f"></div>
<div class="a" style="left:951px;top:69px;width:1px;height:584px;background:#1f1f1f"></div>
<div class="a" style="left:436px;top:483px;width:1px;height:169px;background:#3d3d3d"></div>
<div class="a" style="left:441px;top:86px;width:1px;height:566px;background:#3d3d3d"></div>
<div class="a" style="left:636px;top:86px;width:1px;height:566px;background:#3d3d3d"></div>
<div class="a" style="left:641px;top:69px;width:1px;height:583px;background:#3d3d3d"></div>
<div class="a" style="left:947px;top:69px;width:1px;height:583px;background:#3d3d3d"></div>
<div class="a" style="left:952px;top:86px;width:1px;height:566px;background:#3d3d3d"></div>
<div class="a" style="left:0px;top:651px;width:437px;height:1px;background:#3d3d3d"></div>
<div class="a" style="left:0px;top:652px;width:437px;height:1px;background:#1f1f1f"></div>
<div class="a" style="left:441px;top:651px;width:196px;height:1px;background:#3d3d3d"></div>
<div class="a" style="left:441px;top:652px;width:196px;height:1px;background:#1f1f1f"></div>
<div class="a" style="left:641px;top:651px;width:307px;height:1px;background:#3d3d3d"></div>
<div class="a" style="left:641px;top:652px;width:307px;height:1px;background:#1f1f1f"></div>
<div class="a" style="left:952px;top:651px;width:252px;height:1px;background:#3d3d3d"></div>
<div class="a" style="left:952px;top:652px;width:252px;height:1px;background:#1f1f1f"></div>
</body></html>
